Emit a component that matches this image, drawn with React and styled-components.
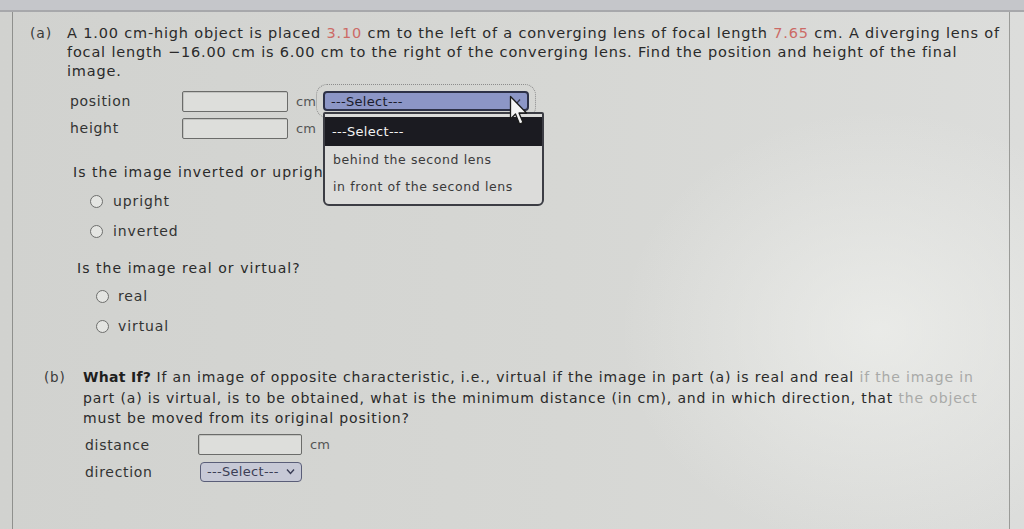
import React from "react";
import styled, { createGlobalStyle } from "styled-components";

const Global = createGlobalStyle`
  html, body { margin: 0; padding: 0; }
  body {
    font-family: "DejaVu Sans", Verdana, sans-serif;
    color: #2c2c2c;
    background: #d4d5d2;
  }
`;

const Page = styled.div`
  width: 1024px;
  height: 529px;
  display: flex;
  flex-direction: column;
  overflow: hidden;
  background:
    radial-gradient(ellipse 260px 220px at 880px 330px, rgba(240,241,238,0.7), rgba(240,241,238,0) 100%),
    linear-gradient(90deg, #d1d2cf 0%, #d6d7d4 55%, #dcdddb 100%);
`;

const TopBand = styled.div`
  height: 10px;
  flex: none;
  background: #c5c6ca;
  border-bottom: 2px solid #a7a8ab;
`;

const Panel = styled.div`
  flex: 1;
  margin: 0 14px 0 12px;
  border-left: 1px solid #8f908d;
  border-right: 1px solid #9a9b98;
  padding: 12px 0 0 17px;
`;

const Part = styled.section`
  display: grid;
  grid-template-columns: ${(p) => p.$labelW}px 1fr;
  padding-left: ${(p) => p.$indent || 0}px;
  margin-top: ${(p) => p.$top || 0}px;
`;

const PartLabel = styled.div`
  font-size: ${(p) => p.$size}px;
  line-height: ${(p) => p.$lh}px;
  letter-spacing: 0.8px;
  color: #3a3a3a;
`;

const Body = styled.div`
  display: flex;
  flex-direction: column;
`;

const Para = styled.div`
  font-size: ${(p) => p.$size}px;
  line-height: ${(p) => p.$lh}px;
  letter-spacing: ${(p) => p.$ls}px;
  white-space: nowrap;
  color: #2a2a2a;
`;

const Line = styled.span`
  display: block;
`;

const Red = styled.span`
  color: #cc6a66;
`;

const Faded = styled.span`
  color: #a9aaa8;
`;

const Bold = styled.b`
  font-weight: bold;
  color: #1e1e1e;
  letter-spacing: 0.3px;
`;

const Form = styled.div`
  display: flex;
  flex-direction: column;
  gap: 1px;
  margin-top: ${(p) => p.$top}px;
  padding-left: ${(p) => p.$indent}px;
`;

const Row = styled.div`
  display: flex;
  align-items: center;
  height: 26px;
`;

const FieldLabel = styled.div`
  width: ${(p) => p.$w}px;
  font-size: 14px;
  letter-spacing: 0.7px;
  color: #333;
`;

const TextBox = styled.div`
  width: ${(p) => p.$w}px;
  height: 21px;
  box-sizing: border-box;
  border: 1px solid #6b6c6a;
  border-radius: 2px;
  background: #dddedb;
  box-shadow: inset 1px 1px 0 #c2c3c0;
`;

const Unit = styled.span`
  margin-left: 8px;
  font-size: 13px;
  color: #555;
  width: ${(p) => p.$w || 20}px;
`;

const SelectWrap = styled.div`
  position: relative;
  margin-left: 7px;
  z-index: ${(p) => (p.$open ? 5 : 1)};
`;

const SelectBox = styled.div`
  width: ${(p) => p.$w}px;
  height: ${(p) => p.$h}px;
  box-sizing: border-box;
  display: flex;
  align-items: center;
  justify-content: space-between;
  padding: 0 6px 0 6px;
  border: ${(p) => (p.$focus ? "2px solid #2d3147" : "1px solid #5a5e78")};
  border-radius: 4px;
  background: ${(p) => (p.$focus ? "#8c96c6" : "#c7c9d6")};
  outline: ${(p) => (p.$focus ? "1px dotted #8c8c8c" : "none")};
  outline-offset: 6px;
  font-size: 13px;
  color: ${(p) => (p.$focus ? "#1a1c2c" : "#3b3e55")};
  letter-spacing: 0.3px;
`;

const Chevron = styled.svg`
  width: 9px;
  height: 7px;
  flex: none;
`;

const DropList = styled.div`
  position: absolute;
  left: 0;
  top: 21px;
  width: 221px;
  height: 94px;
  box-sizing: border-box;
  border: 2px solid #3c3d44;
  border-radius: 2px 2px 6px 6px;
  background: #dcdcda;
  padding-top: 3px;
  display: flex;
  flex-direction: column;
`;

const Option = styled.div`
  height: ${(p) => p.$h}px;
  display: flex;
  align-items: center;
  padding-left: ${(p) => (p.$active ? 7 : 8)}px;
  font-size: ${(p) => (p.$active ? 13 : 12.5)}px;
  letter-spacing: ${(p) => (p.$active ? 0.3 : 0.6)}px;
  background: ${(p) => (p.$active ? "#1b1b21" : "transparent")};
  color: ${(p) => (p.$active ? "#f2f2f2" : "#3a3a3a")};
`;

const Cursor = styled.svg`
  position: absolute;
  left: 186px;
  top: 4px;
  width: 20px;
  height: 31px;
`;

const Question = styled.div`
  margin-top: ${(p) => p.$top}px;
  padding-left: ${(p) => p.$indent}px;
  font-size: 14px;
  line-height: 20px;
  letter-spacing: ${(p) => p.$ls}px;
  color: #2a2a2a;
  white-space: nowrap;
`;

const Choices = styled.div`
  display: flex;
  flex-direction: column;
  margin-top: ${(p) => p.$top}px;
  padding-left: ${(p) => p.$indent}px;
`;

const Choice = styled.label`
  display: flex;
  align-items: center;
  height: 30px;
  gap: ${(p) => p.$gap}px;
  font-size: 14px;
  letter-spacing: 0.9px;
  color: #333;
`;

const RadioDot = styled.span`
  width: 13px;
  height: 13px;
  box-sizing: border-box;
  border-radius: 50%;
  border: 1.5px solid #6e6f6d;
  background: #e4e5e2;
  flex: none;
`;

function ChevronIcon() {
  return (
    <Chevron viewBox="0 0 9 7">
      <path d="M1 1.5 L4.5 5.5 L8 1.5" fill="none" stroke="#3a3d55" strokeWidth="1.4" />
    </Chevron>
  );
}

export default function App() {
  return (
    <Page>
      <Global />
      <TopBand />
      <Panel>
        <Part $labelW={37}>
          <PartLabel $size={14} $lh={19}>(a)</PartLabel>
          <Body>
            <Para $size={14.5} $lh={19} $ls={0.82}>
              <Line>
                A 1.00 cm-high object is placed <Red>3.10</Red> cm to the left of a converging lens of focal length <Red>7.65</Red> cm. A diverging lens of
              </Line>
              <Line>
                focal length −16.00 cm is 6.00 cm to the right of the converging lens. Find the position and height of the final
              </Line>
              <Line>image.</Line>
            </Para>

            <Form $top={7} $indent={3}>
              <Row>
                <FieldLabel $w={112}>position</FieldLabel>
                <TextBox $w={106} />
                <Unit>cm</Unit>
                <SelectWrap $open>
                  <SelectBox $w={206} $h={20} $focus>
                    <span>---Select---</span>
                    <ChevronIcon />
                  </SelectBox>
                  <DropList>
                    <Option $h={29} $active>---Select---</Option>
                    <Option $h={27}>behind the second lens</Option>
                    <Option $h={27}>in front of the second lens</Option>
                  </DropList>
                  <Cursor viewBox="0 0 20 31">
                    <path
                      d="M1.5 1.5 L1.5 24 L6.5 19 L10.5 29 L14 27.5 L10 18 L17.5 18 Z"
                      fill="#f4f4f4"
                      stroke="#1a1a1a"
                      strokeWidth="1.3"
                      strokeLinejoin="round"
                    />
                  </Cursor>
                </SelectWrap>
              </Row>
              <Row>
                <FieldLabel $w={112}>height</FieldLabel>
                <TextBox $w={106} />
                <Unit>cm</Unit>
              </Row>
            </Form>

            <Question $top={21} $indent={6} $ls={1.05}>
              Is the image inverted or upright?
            </Question>
            <Choices $top={4} $indent={23}>
              <Choice $gap={10}>
                <RadioDot />
                upright
              </Choice>
              <Choice $gap={10}>
                <RadioDot />
                inverted
              </Choice>
            </Choices>

            <Question $top={12} $indent={10} $ls={1.05}>
              Is the image real or virtual?
            </Question>
            <Choices $top={3} $indent={29}>
              <Choice $gap={9}>
                <RadioDot />
                real
              </Choice>
              <Choice $gap={9}>
                <RadioDot />
                virtual
              </Choice>
            </Choices>
          </Body>
        </Part>

        <Part $labelW={39} $indent={14} $top={26}>
          <PartLabel $size={13.5} $lh={20.5}>(b)</PartLabel>
          <Body>
            <Para $size={14} $lh={20.5} $ls={0.85}>
              <Line>
                <Bold>What If?</Bold> If an image of opposite characteristic, i.e., virtual if the image in part (a) is real and real <Faded>if the image in</Faded>
              </Line>
              <Line>
                part (a) is virtual, is to be obtained, what is the minimum distance (in cm), and in which direction, that <Faded>the object</Faded>
              </Line>
              <Line>must be moved from its original position?</Line>
            </Para>
            <Form $top={3} $indent={2}>
              <Row>
                <FieldLabel $w={113}>distance</FieldLabel>
                <TextBox $w={104} />
                <Unit>cm</Unit>
              </Row>
              <Row>
                <FieldLabel $w={115}>direction</FieldLabel>
                <SelectBox $w={102} $h={20}>
                  <span>---Select---</span>
                  <ChevronIcon />
                </SelectBox>
              </Row>
            </Form>
          </Body>
        </Part>
      </Panel>
    </Page>
  );
}
